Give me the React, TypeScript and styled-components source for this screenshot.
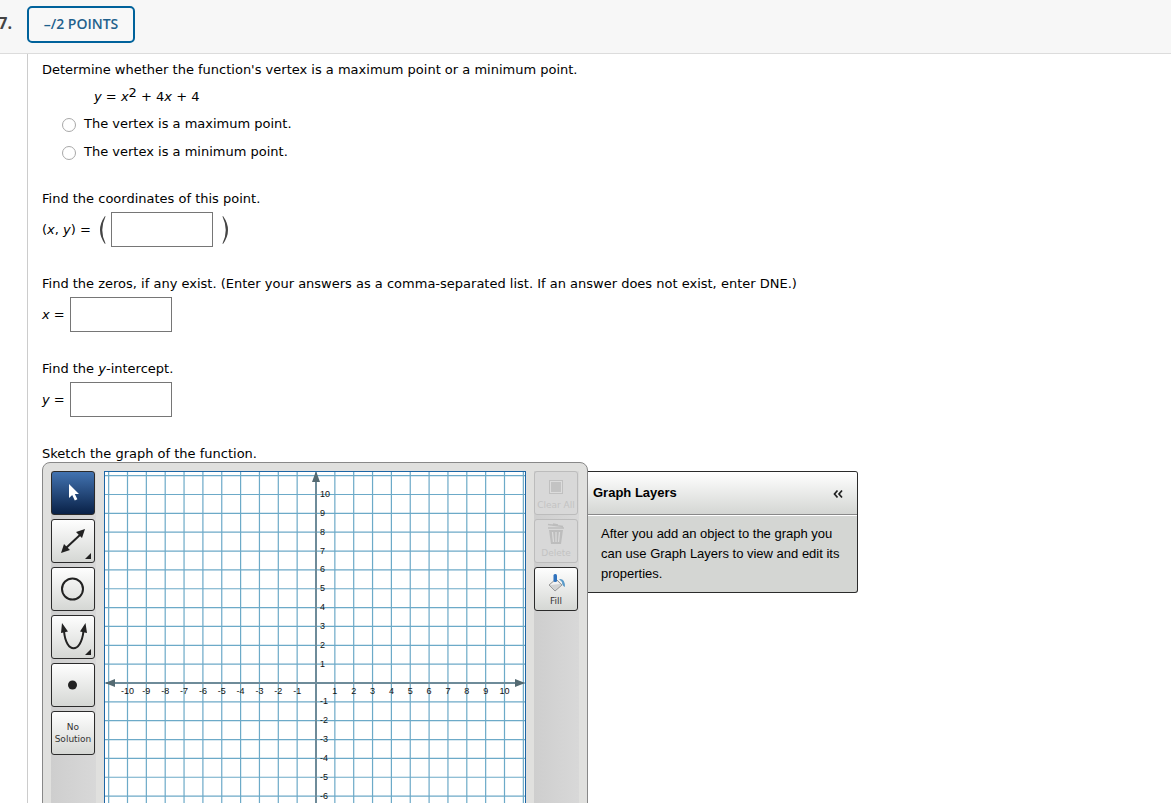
import React from 'react';
import styled, { createGlobalStyle } from 'styled-components';

const GlobalStyle = createGlobalStyle`
  *, *::before, *::after { box-sizing: border-box; }
  body {
    margin: 0;
    height: 100vh;
    overflow: hidden;
    background: #fff;
    color: #000;
    font: 13px/16px Verdana, "DejaVu Sans", sans-serif;
  }
  button, input { font: inherit; color: inherit; }
`;

const Header = styled.header`
  display: flex;
  align-items: flex-start;
  gap: 15px;
  height: 54px;
  padding-top: 6px;
  background: #f7f7f7;
  border-bottom: 1px solid #dcdcdc;
  font-family: "Open Sans", sans-serif;
`;

const Number = styled.span`
  width: 12px;
  display: flex;
  justify-content: flex-end;
  font-size: 16px;
  line-height: 34px;
  font-weight: 700;
  color: #444;
`;

const Points = styled.button`
  display: flex;
  align-items: center;
  justify-content: center;
  min-width: 108px;
  height: 37px;
  padding: 0 12px 2px;
  border: 2px solid #00629b;
  border-radius: 5px;
  background: #f8f8f8;
  color: #1f618d;
  font-size: 14px;
  font-weight: 600;
  white-space: nowrap;
`;

const Question = styled.main`
  margin-left: 27px;
  padding: 8px 0 0 14px;
  border-left: 1px solid #ccc;
`;

const Prompt = styled.p`
  margin: 0;
`;

const Equation = styled.p`
  margin: 11px 0 5px 52px;
  sup { font-size: 13px; line-height: 0; vertical-align: 4px; }
`;

const Choices = styled.div`
  margin: 0 0 25px 20px;
`;

const Choice = styled.label`
  display: flex;
  align-items: center;
  gap: 8px;
  height: 28px;
`;

const Radio = styled.input`
  appearance: none;
  width: 14px;
  height: 14px;
  margin: 2px 0 0;
  border: 1px solid #a8a8a8;
  border-radius: 50%;
  background: #fff;
  &:checked { background: #1f618d; box-shadow: inset 0 0 0 3px #fff; }
`;

const Part = styled.section`
  margin-bottom: 29px;
`;

const AnswerRow = styled.div`
  display: flex;
  align-items: center;
  gap: 5px;
  height: 35px;
  margin-top: 5px;
`;

const Answer = styled.input`
  width: 102px;
  height: 35px;
  padding: 4px 8px;
  border: 1px solid #767676;
  background: #fff;
`;

const ParenGroup = styled.span`
  display: flex;
  align-items: center;
  gap: 9px;
  padding-left: 3px;
`;

const Paren = styled.svg`
  width: 7px;
  height: 28px;
  fill: #444;
`;

const OpenGroup = styled.span`
  display: flex;
  align-items: center;
  gap: 5px;
`;

const GraphTool = styled.div`
  display: flex;
  align-items: flex-start;
`;

const GraphPanel = styled.div`
  display: flex;
  gap: 8px;
  padding: 8px;
  border: 1px solid #888;
  border-radius: 8px;
  background: #e0e0de;
`;

const ToolColumn = styled.div`
  display: flex;
  flex-direction: column;
  gap: 4px;
  width: 45px;
  background: linear-gradient(to right, #cecece, #d8d8d8);
`;

const Tool = styled.button<{ $active?: boolean }>`
  display: flex;
  flex-direction: column;
  align-items: center;
  justify-content: center;
  width: 44px;
  height: 44px;
  padding: 0;
  border: 1px solid #2b2b2b;
  border-radius: 3px;
  background: ${p => (p.$active ? 'linear-gradient(#4273b1, #092147)' : 'linear-gradient(#fefefe, #d5d7d4)')};
  color: #333;
  font-size: 9px;
  line-height: 12px;
  &:disabled { background: #d8d8d8; border-color: #bcbcbc; color: #c3c3c3; }
`;

const ToolIcon = styled.svg`
  display: block;
  width: 42px;
  height: 42px;
`;

const SmallIcon = styled.svg`
  display: block;
  width: 26px;
  height: 24px;
`;

const Plane = styled.svg`
  display: block;
  width: 422px;
  height: 422px;
  background: #fff;
  font: 9px "Liberation Sans", Arial, sans-serif;
`;

const Layers = styled.aside`
  width: 270px;
  margin-top: 9px;
  border: 1px solid #2b2b2b;
  border-left: 0;
  border-radius: 0 3px 3px 0;
  background: #d4d6d3;
  font: 13px/20px "Liberation Sans", Arial, sans-serif;
  overflow: hidden;
`;

const LayersHeader = styled.div`
  display: flex;
  align-items: center;
  justify-content: space-between;
  height: 43px;
  padding: 0 14px 0 5px;
  border-bottom: 1px solid #888;
  background: linear-gradient(#fff, #d4d6d3);
`;

const LayersTitle = styled.h2`
  margin: 0;
  font-size: 13px;
  line-height: 20px;
`;

const Collapse = styled.button`
  padding: 2px 0 0;
  border: 0;
  background: none;
  svg { display: block; width: 10px; height: 10px; }
`;

const LayersText = styled.p`
  margin: 0;
  padding: 8px 8px 8px 13px;
  border-top: 1px solid #fff;
`;

const MID = 212;
const UNIT = 18.85;
const ticks = Array.from({ length: 23 }, (_, i) => i - 11);
const labelled = ticks.filter(n => n !== 0 && Math.abs(n) < 11);

function CoordinatePlane() {
  return (
    <Plane viewBox="0 0 422 422" role="img" aria-label="Coordinate plane">
      <g stroke="#1f7dab" strokeWidth="1.2" opacity="0.65">
        {ticks.map(n => (
          <g key={n}>
            <line x1={MID + n * UNIT} x2={MID + n * UNIT} y1="0" y2="422" />
            <line y1={MID + n * UNIT} y2={MID + n * UNIT} x1="0" x2="422" />
          </g>
        ))}
      </g>
      <path d="M212 2V420M2 212H420" stroke="#6e8b99" strokeWidth="2" />
      <path d="M212 0l4 11h-8zM212 422l4-11h-8zM1 212l10-4v8zM421 212l-10-4v8z" fill="#546a72" />
      <g fill="#111">
        {labelled.map(n => (
          <text key={n} x={MID + n * UNIT} y="223" textAnchor="middle">{n}</text>
        ))}
        {labelled.map(n => (
          <text key={n} x="216" y={MID - n * UNIT + 2.5}>{n}</text>
        ))}
      </g>
      <rect x="0.5" y="0.5" width="421" height="421" fill="none" stroke="#1d66a5" />
    </Plane>
  );
}

const Corner = () => <path d="M39 33v6h-6z" fill="#222" />;

export default function App() {
  return (
    <>
      <GlobalStyle />
      <Header>
        <Number>7.</Number>
        <Points>–/2 POINTS</Points>
      </Header>
      <Question>
        <Prompt>Determine whether the function's vertex is a maximum point or a minimum point.</Prompt>
        <Equation><i>y</i> = <i>x</i><sup>2</sup> + 4<i>x</i> + 4</Equation>
        <Choices role="radiogroup" aria-label="Vertex type">
          <Choice><Radio type="radio" name="vertex" />The vertex is a maximum point.</Choice>
          <Choice><Radio type="radio" name="vertex" />The vertex is a minimum point.</Choice>
        </Choices>
        <Part>
          <Prompt>Find the coordinates of this point.</Prompt>
          <AnswerRow>
            <label htmlFor="point">(<i>x</i>, <i>y</i>) =</label>
            <ParenGroup>
              <OpenGroup>
                <Paren viewBox="0 0 7 28" aria-hidden="true"><path d="M6 0Q-4 14 6 28L6.500 27.500Q0 14 6.500 0.500z" /></Paren>
                <Answer id="point" />
              </OpenGroup>
              <Paren viewBox="0 0 7 28" aria-hidden="true"><path d="M1 0Q11 14 1 28L0.500 27.500Q7 14 0.500 0.500z" /></Paren>
            </ParenGroup>
          </AnswerRow>
        </Part>
        <Part>
          <Prompt>Find the zeros, if any exist. (Enter your answers as a comma-separated list. If an answer does not exist, enter DNE.)</Prompt>
          <AnswerRow>
            <label htmlFor="zeros"><i>x</i> =</label>
            <Answer id="zeros" />
          </AnswerRow>
        </Part>
        <Part>
          <Prompt>Find the <i>y</i>-intercept.</Prompt>
          <AnswerRow>
            <label htmlFor="intercept"><i>y</i> =</label>
            <Answer id="intercept" />
          </AnswerRow>
        </Part>
        <Prompt>Sketch the graph of the function.</Prompt>
        <GraphTool>
          <GraphPanel>
            <ToolColumn>
              <Tool $active aria-label="Select">
                <ToolIcon viewBox="0 0 42 42"><path d="M17 12v14l3.2-3 2.6 5.5 2.6-1.2-2.6-5.3h4.2z" fill="#fff" /></ToolIcon>
              </Tool>
              <Tool aria-label="Line">
                <ToolIcon viewBox="0 0 42 42">
                  <path d="M14 28L29 14" stroke="#222" strokeWidth="2" />
                  <path d="M33 9l-3 9-6-6zM9 33l3-9 6 6z" fill="#222" />
                  <Corner />
                </ToolIcon>
              </Tool>
              <Tool aria-label="Circle">
                <ToolIcon viewBox="0 0 42 42"><circle cx="20.5" cy="21" r="10.5" fill="none" stroke="#222" strokeWidth="2" /></ToolIcon>
              </Tool>
              <Tool aria-label="Parabola">
                <ToolIcon viewBox="0 0 42 42">
                  <path d="M12 15C14 38 29 38 31.500 15" fill="none" stroke="#222" strokeWidth="2" />
                  <path d="M10 7l6 8.500-7 1.500zM33.500 7l1.500 10-7-1.500z" fill="#222" />
                  <Corner />
                </ToolIcon>
              </Tool>
              <Tool aria-label="Point">
                <ToolIcon viewBox="0 0 42 42"><circle cx="20.5" cy="21" r="4.5" fill="#222" /></ToolIcon>
              </Tool>
              <Tool>No<br />Solution</Tool>
            </ToolColumn>
            <CoordinatePlane />
            <ToolColumn>
              <Tool disabled>
                <SmallIcon viewBox="0 0 26 24">
                  <rect x="6.5" y="5.5" width="13" height="13" fill="#dcdcdc" stroke="#c0c0c0" />
                  <rect x="8" y="7" width="10" height="10" fill="#c3c3c3" />
                </SmallIcon>
                Clear All
              </Tool>
              <Tool disabled>
                <SmallIcon viewBox="0 0 26 24">
                  <path d="M5 1.500l15 2M10 1l5 1M5 5h16" stroke="#bdbdbd" strokeWidth="1.3" fill="none" />
                  <path d="M6 7h14l-2 14H8z" fill="#bdbdbd" />
                  <path d="M9.500 9l1 10M13 9v10M16.500 9l-1 10" stroke="#dadada" strokeWidth="1.3" />
                </SmallIcon>
                Delete
              </Tool>
              <Tool>
                <SmallIcon viewBox="0 0 26 24">
                  <path d="M16 8q6-1 6 8-3-1-3-5z" fill="#5b9bc9" />
                  <path d="M6 14l7-6 6 6-7 6z" fill="#d2d3d3" stroke="#999" />
                  <path d="M7 14l6-5 4 4z" fill="#f2f2f2" />
                  <rect x="10.5" y="3" width="3.5" height="8" rx="1.500" fill="#2f72bd" />
                </SmallIcon>
                Fill
              </Tool>
            </ToolColumn>
          </GraphPanel>
          <Layers>
            <LayersHeader>
              <LayersTitle>Graph Layers</LayersTitle>
              <Collapse aria-label="Collapse">
                <svg viewBox="0 0 10 10"><path d="M4.500 1.500L1.500 5l3 3.500M9 1.500L6 5l3 3.500" fill="none" stroke="#222" strokeWidth="1.700" /></svg>
              </Collapse>
            </LayersHeader>
            <LayersText>After you add an object to the graph you can use Graph Layers to view and edit its properties.</LayersText>
          </Layers>
        </GraphTool>
      </Question>
    </>
  );
}
